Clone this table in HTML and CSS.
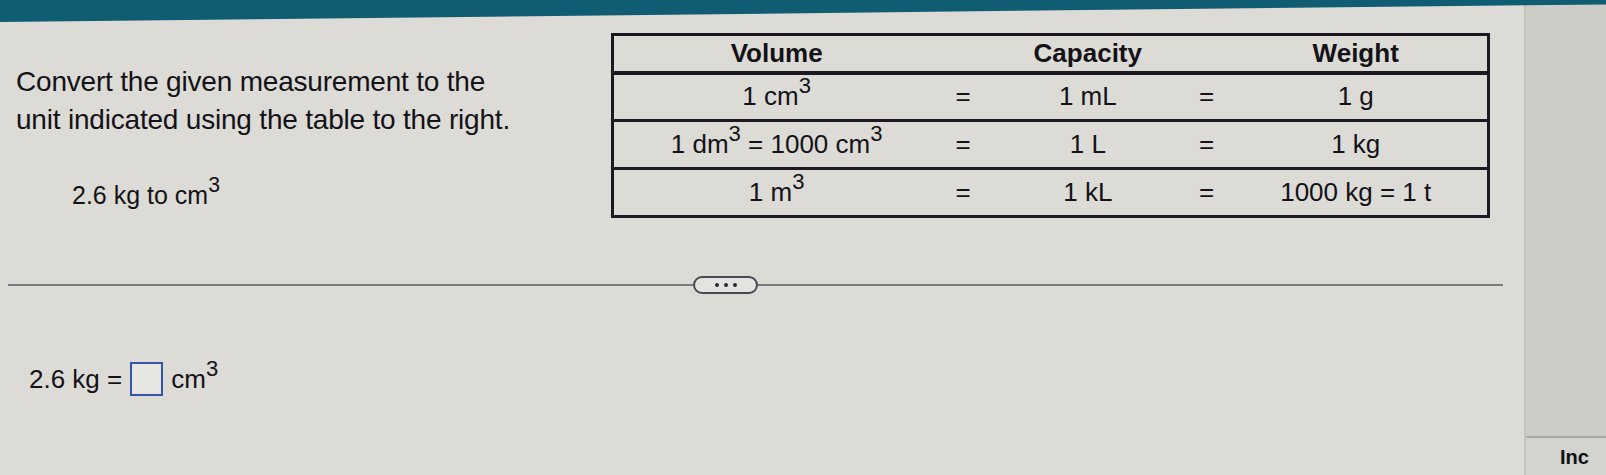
FILE: index.html
```html
<!DOCTYPE html>
<html>
<head>
<meta charset="utf-8">
<link rel="stylesheet" href="styles.css">
</head>
<body>
<div class="topbar"></div>
<div class="screen">
  <main class="panel">
    <section class="question">
      <div class="prompt">
        <p class="instr">Convert the given measurement to the<br>unit indicated using the table to the right.</p>
        <p class="given">2.6 kg to cm<sup>3</sup></p>
      </div>
      <table class="units">
        <thead>
          <tr><th class="c1">Volume</th><th class="c2"></th><th class="c3">Capacity</th><th class="c4"></th><th class="c5">Weight</th></tr>
        </thead>
        <tbody>
          <tr><td>1 cm<sup>3</sup></td><td>=</td><td>1 mL</td><td>=</td><td>1 g</td></tr>
          <tr><td>1 dm<sup>3</sup> = 1000 cm<sup>3</sup></td><td>=</td><td>1 L</td><td>=</td><td>1 kg</td></tr>
          <tr><td>1 m<sup>3</sup></td><td>=</td><td>1 kL</td><td>=</td><td>1000 kg = 1 t</td></tr>
        </tbody>
      </table>
    </section>
    <div class="divider">
      <span class="line line-left"></span>
      <button class="more"><i></i><i></i><i></i></button>
      <span class="line line-right"></span>
    </div>
    <div class="answer">
      <span>2.6 kg =</span>
      <span class="box"></span>
      <span>cm<sup>3</sup></span>
    </div>
  </main>
  <aside class="side">
    <div class="side-top"></div>
    <div class="side-bottom"><span class="side-text">Inc</span></div>
  </aside>
</div>
</body>
</html>
```
FILE: styles.css
```css
* { box-sizing: border-box; }
html, body {
  margin: 0;
  padding: 0;
  width: 1606px;
  height: 475px;
  overflow: hidden;
}
body {
  background: #cfcfca;
  font-family: "Liberation Sans", Arial, sans-serif;
  color: #141216;
}
.topbar {
  height: 22px;
  background: #0f5c73;
  clip-path: polygon(0 0, 100% 0, 100% 20%, 0 100%);
  margin-bottom: -22px;
  position: relative;
  z-index: 2;
}
.screen {
  display: flex;
  height: 475px;
}
.panel {
  width: 1526px;
  background: #dcdbd6;
  padding-top: 20px;
  border-right: 2px solid #c4c4bf;
}
.question {
  display: flex;
  align-items: flex-start;
}
.prompt {
  width: 611px;
  padding-left: 16px;
  padding-top: 43px;
}
.instr {
  margin: 0;
  font-size: 28px;
  line-height: 38px;
  letter-spacing: -0.2px;
}
.given {
  margin: 40px 0 0 56px;
  font-size: 25px;
  line-height: 32px;
}
sup {
  font-size: 0.85em;
  line-height: 0;
  vertical-align: 0.55em;
}
.units {
  margin-top: 13px;
  width: 879px;
  border-collapse: collapse;
  border: 3px solid #1d1822;
  font-size: 26px;
  text-align: center;
}
.units th {
  font-weight: bold;
  font-size: 26px;
  height: 38px;
  padding: 0;
  border-bottom: 4px solid #1d1822;
}
.units td {
  height: 48px;
  padding: 0;
  border-bottom: 3px solid #1d1822;
}
.units .c1 { width: 328px; }
.units .c2 { width: 48px; }
.units .c3 { width: 202px; }
.units .c4 { width: 36px; }
.units .c5 { width: 265px; }
.divider {
  display: flex;
  align-items: center;
  margin-top: 58px;
  padding-left: 8px;
  width: 1503px;
}
.line {
  height: 2px;
  background: #7c7a80;
}
.line-left { width: 685px; }
.line-right { flex: 1; }
.more {
  width: 65px;
  height: 18px;
  border: 2px solid #4a4850;
  border-radius: 9px;
  background: #e4e3df;
  display: flex;
  align-items: center;
  justify-content: center;
  gap: 5px;
  padding: 0;
}
.more i {
  width: 4px;
  height: 4px;
  border-radius: 50%;
  background: #2a2830;
}
.answer {
  margin-top: 68px;
  padding-left: 29px;
  font-size: 26px;
  line-height: 34px;
  display: flex;
  align-items: center;
  gap: 8px;
}
.answer .box {
  width: 33px;
  height: 34px;
  border: 2px solid #3556a8;
  background: #e6e6e3;
}
.side {
  flex: 1;
  display: flex;
  flex-direction: column;
}
.side-top {
  height: 438px;
  background: #cdcdc8;
  border-bottom: 2px solid #a9a9a5;
}
.side-bottom {
  flex: 1;
  background: #d3d3cf;
  position: relative;
  overflow: hidden;
}
.side-text {
  position: absolute;
  left: 34px;
  top: 8px;
  font-size: 20px;
  font-weight: bold;
  color: #111;
}
```
